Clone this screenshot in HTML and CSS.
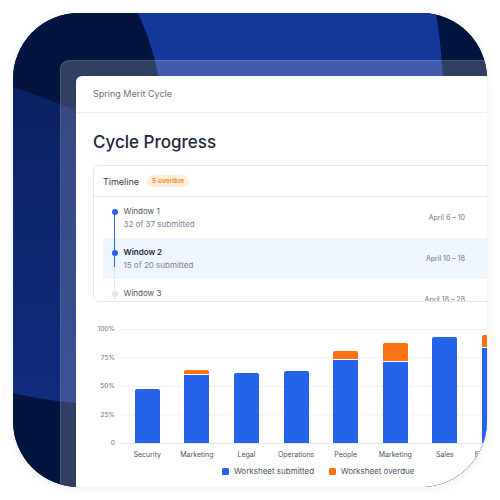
FILE: index.html
```html
<!DOCTYPE html>
<html>
<head>
<meta charset="utf-8">
<link rel="stylesheet" href="styles.css">
</head>
<body>
<div class="card">
  <svg class="bg" viewBox="0 0 474 474" width="474" height="474" aria-hidden="true">
    <defs>
      <linearGradient id="g1" x1="0" y1="0" x2="0" y2="1">
        <stop offset="0" stop-color="#0a2162"/>
        <stop offset="1" stop-color="#0f2c7e"/>
      </linearGradient>
    </defs>
    <rect width="474" height="474" fill="#03153f"/>
    <path d="M125 0 H423 C427 25 429 45 431 80 V140 H150 C152 90 146 45 125 0 Z" fill="#15399b"/>
    <path d="M0 74 C18 80 34 86 60 96 L170 104 V388 L60 390 C36 387 16 384 0 380 Z" fill="url(#g1)"/>
  </svg>
  <div class="frame">
    <div class="panel">
      <div class="panel-head">Spring Merit Cycle</div>
      <div class="panel-body">
        <h1 class="title">Cycle Progress</h1>
        <section class="timeline">
          <div class="tl-head"><span class="tl-title">Timeline</span><span class="badge">5 overdue</span></div>
          <div class="tl-row r1">
            <div class="rail"><span class="seg seg-top"></span><span class="dot"></span><span class="seg seg-bot"></span></div>
            <div class="tl-text"><div class="tl-name">Window 1</div><div class="tl-sub">32 of 37 submitted</div></div>
            <div class="tl-date">April 6 – 10</div>
          </div>
          <div class="tl-row r2 active">
            <div class="rail"><span class="seg seg-top"></span><span class="dot"></span><span class="seg seg-bot"></span></div>
            <div class="tl-text"><div class="tl-name">Window 2</div><div class="tl-sub">15 of 20 submitted</div></div>
            <div class="tl-date">April 10 – 18</div>
          </div>
          <div class="tl-row r3">
            <div class="rail"><span class="seg seg-top"></span><span class="dot"></span><span class="seg seg-bot"></span></div>
            <div class="tl-text"><div class="tl-name">Window 3</div><div class="tl-sub">0 of 24 submitted</div></div>
            <div class="tl-date">April 18 – 28</div>
          </div>
        </section>
        <section class="chart">
          <div class="y-axis"><span>100%</span><span>75%</span><span>50%</span><span>25%</span><span>0</span></div>
          <div class="plot">
            <div class="col"><div class="stack"><div class="sb" style="height:47%"></div></div></div>
            <div class="col"><div class="stack"><div class="so" style="height:4%"></div><div class="sb" style="height:60%"></div></div></div>
            <div class="col"><div class="stack"><div class="sb" style="height:61%"></div></div></div>
            <div class="col"><div class="stack"><div class="sb" style="height:63%"></div></div></div>
            <div class="col"><div class="stack"><div class="so" style="height:8%"></div><div class="sb" style="height:73%"></div></div></div>
            <div class="col"><div class="stack"><div class="so" style="height:16.5%"></div><div class="sb" style="height:71%"></div></div></div>
            <div class="col"><div class="stack"><div class="sb" style="height:93%"></div></div></div>
            <div class="col"><div class="stack"><div class="so" style="height:12%"></div><div class="sb" style="height:83%"></div></div></div>
          </div>
          <div></div>
          <div class="x-axis"><span>Security</span><span>Marketing</span><span>Legal</span><span>Operations</span><span>People</span><span>Marketing</span><span>Sales</span><span>Engineering</span></div>
          <div></div>
          <div class="legend">
            <span class="lg"><i class="sw blue"></i>Worksheet submitted</span>
            <span class="lg"><i class="sw orange"></i>Worksheet overdue</span>
          </div>
        </section>
      </div>
    </div>
  </div>
</div>
</body>
</html>
```

FILE: styles.css
```css
* { box-sizing: border-box; }
html, body { margin: 0; padding: 0; background: #fff; }
body { font-family: Inter, "Noto Sans", sans-serif; }

.card {
  position: relative;
  margin: 13px;
  width: 474px;
  height: 474px;
  border-radius: 66px;
  overflow: hidden;
  background: #03153f;
  box-shadow: 0 2px 10px rgba(15, 23, 42, 0.08);
}
.bg { position: absolute; left: 0; top: 0; }

.frame {
  position: relative;
  margin: 47px 0 0 47px;
  width: 520px;
  height: 520px;
  padding: 16px 0 0 16px;
  background: rgba(255, 255, 255, 0.18);
  border-radius: 9px 0 0 0;
  box-shadow: inset 1px 1px 0 rgba(255, 255, 255, 0.12);
}
.panel {
  width: 460px;
  height: 500px;
  background: #fff;
  border-radius: 6px 0 0 0;
}
.panel-head {
  height: 37px;
  padding: 0 0 1px 17px;
  display: flex;
  align-items: center;
  font-size: 9px;
  color: #6b7280;
  border-bottom: 1px solid #eef0f4;
}
.panel-body { padding: 0 17px; }
.title {
  margin: 17px 0 11px;
  font-size: 17px;
  line-height: 24px;
  font-weight: 500;
  color: #1e293b;
}

.timeline {
  height: 137px;
  border: 1px solid #e5e7eb;
  border-radius: 6px;
  overflow: hidden;
}
.tl-head {
  height: 31px;
  padding-left: 9px;
  display: flex;
  align-items: center;
  gap: 8px;
  border-bottom: 1px solid #e5e7eb;
}
.tl-title { font-size: 9px; color: #374151; }
.badge {
  font-size: 6.7px;
  line-height: 12px;
  padding: 0 5px;
  border-radius: 6px;
  background: #ffedd5;
  color: #f97316;
  font-weight: 500;
}
.tl-row {
  display: flex;
  height: 41px;
  margin: 0 9px;
  padding: 0 44px 0 8.5px;
}
.tl-row.active { background: #eff5ff; }
.rail {
  width: 6px;
  display: flex;
  flex-direction: column;
  align-items: center;
  margin-right: 6px;
}
.seg { width: 1.5px; display: block; }
.seg-top { height: 11.5px; }
.seg-bot { flex: 1; }
.dot { width: 6px; height: 6px; border-radius: 50%; display: block; flex: none; }
.r1 .dot, .r2 .dot { background: #2563eb; }
.r1 .seg-bot, .r2 .seg-top { background: #2563eb; }
.r2 .seg-bot { background: linear-gradient(#2563eb 11.5px, #e5e7eb 11.5px); }
.r3 .seg-top, .r3 .seg-bot { background: #e5e7eb; }
.r3 .dot { background: #e2e6ee; }
.tl-text { padding-top: 8px; }
.tl-name { font-size: 8px; line-height: 13px; color: #4b5563; }
.active .tl-name { font-weight: 600; color: #1f2937; }
.tl-sub { font-size: 8px; line-height: 13px; color: #7b8290; }
.tl-date {
  margin-left: auto;
  align-self: center;
  font-size: 7px;
  color: #6b7280;
}

.chart {
  margin-top: 27px;
  display: grid;
  grid-template-columns: 22px 396.8px;
  column-gap: 5px;
  align-items: start;
}
.y-axis {
  height: 124px;
  margin-top: -5px;
  display: flex;
  flex-direction: column;
  justify-content: space-between;
  text-align: right;
  font-size: 6.6px;
  line-height: 10px;
  color: #6b7280;
}
.plot {
  height: 115px;
  padding-left: 2.5px;
  display: flex;
  align-items: flex-end;
  background-image: linear-gradient(#eef1f6 1px, transparent 1px);
  background-size: 100% 28.5px;
  border-bottom: 1px solid #e8ebf0;
}
.col { width: 49.6px; flex: none; height: 114px; }
.stack {
  width: 25px;
  height: 100%;
  margin: 0 auto;
  display: flex;
  flex-direction: column;
  justify-content: flex-end;
}
.stack > div:first-child { border-radius: 2px 2px 0 0; }
.sb { background: #2563eb; }
.so { background: #f97316; border-bottom: 1px solid #fff; }

.x-axis {
  margin-top: 2px;
  padding-left: 2.5px;
  display: flex;
  font-size: 7px;
  line-height: 10px;
  color: #4b5563;
}
.x-axis span { width: 49.6px; flex: none; text-align: center; white-space: nowrap; }
.legend {
  margin-top: 6px;
  display: flex;
  justify-content: center;
  gap: 15px;
  font-size: 8px;
  line-height: 10px;
  color: #4b5563;
}
.lg { display: flex; align-items: center; gap: 4.5px; }
.sw { width: 7px; height: 7px; border-radius: 1.5px; display: block; }
.sw.blue { background: #2563eb; }
.sw.orange { background: #f97316; }
```
